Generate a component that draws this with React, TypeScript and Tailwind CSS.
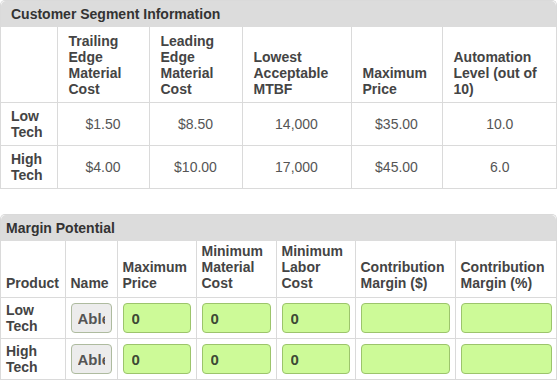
import React from 'react';

const segCols = [
  { label: 'Trailing Edge Material Cost', w: 'w-[92px]' },
  { label: 'Leading Edge Material Cost', w: 'w-[93px]' },
  { label: 'Lowest Acceptable MTBF', w: 'w-[109px]' },
  { label: 'Maximum Price', w: 'w-[91px]' },
  { label: 'Automation Level (out of 10)', w: 'w-[115px]' },
];

const segRows = [
  { name: 'Low Tech', values: ['$1.50', '$8.50', '14,000', '$35.00', '10.0'] },
  { name: 'High Tech', values: ['$4.00', '$10.00', '17,000', '$45.00', '6.0'] },
];

const marginRows = ['Low Tech', 'High Tech'];

function GreenInput({ value }: { value: string }) {
  return (
    <input
      readOnly
      value={value}
      className="w-full h-[30px] rounded-[4px] border border-[#9cc46c] bg-[#cdfa98] px-[8px] text-[15px] font-bold text-[#3d4a35] outline-none"
    />
  );
}

export default function App() {
  return (
    <div className="w-[557px] h-[387px] overflow-hidden bg-white font-['Liberation_Sans',Arial,sans-serif] text-[14px] leading-4 text-[#444]">
      {/* Customer Segment Information */}
      <div className="rounded-t-[5px] border border-[#dadada] border-b-0">
        <div className="h-[26px] rounded-t-[5px] bg-[#dcdcdc] px-[10px] flex items-center font-bold text-[14px] text-[#333]">
          Customer Segment Information
        </div>
        <table className="w-full table-fixed border-collapse">
          <thead>
            <tr>
              <th className="w-[56px] h-[75px] border-r border-b border-[#dadada]"></th>
              {segCols.map((c) => (
                <th
                  key={c.label}
                  className={`${c.w} h-[75px] border-r last:border-r-0 border-b border-[#dadada] align-bottom text-left font-bold px-[11px] pb-[5px] text-[#444]`}
                >
                  {c.label}
                </th>
              ))}
            </tr>
          </thead>
          <tbody>
            {segRows.map((r) => (
              <tr key={r.name}>
                <td className="h-[43px] border-r border-b border-[#dadada] px-[10px] font-bold text-[#444]">
                  {r.name.split(' ').map((p) => (
                    <div key={p}>{p}</div>
                  ))}
                </td>
                {r.values.map((v, i) => (
                  <td
                    key={i}
                    className="h-[43px] border-r last:border-r-0 border-b border-[#dadada] text-center text-[#555]"
                  >
                    {v}
                  </td>
                ))}
              </tr>
            ))}
          </tbody>
        </table>
      </div>

      {/* Margin Potential */}
      <div className="mt-[25px] rounded-t-[5px] border border-[#dadada] border-b-0">
        <div className="h-[26px] rounded-t-[5px] bg-[#dcdcdc] px-[5px] flex items-center font-bold text-[14px] text-[#333]">
          Margin Potential
        </div>
        <table className="w-full table-fixed border-collapse">
          <thead>
            <tr>
              <th className="w-[64px] h-[57px] border-r border-b border-[#dadada] align-bottom text-left font-bold px-[5px] pb-[6px]">
                Product
              </th>
              <th className="w-[52px] border-r border-b border-[#dadada] align-bottom text-left font-bold px-[5px] pb-[6px]">
                Name
              </th>
              <th className="w-[79px] border-r border-b border-[#dadada] align-bottom text-left font-bold px-[5px] pb-[6px]">
                Maximum Price
              </th>
              <th className="w-[80px] border-r border-b border-[#dadada] align-bottom text-left font-bold px-[5px] pb-[6px]">
                Minimum Material Cost
              </th>
              <th className="w-[79px] border-r border-b border-[#dadada] align-bottom text-left font-bold px-[5px] pb-[6px]">
                Minimum Labor Cost
              </th>
              <th className="w-[100px] border-r border-b border-[#dadada] align-bottom text-left font-bold px-[5px] pb-[6px]">
                Contribution Margin ($)
              </th>
              <th className="w-[102px] border-b border-[#dadada] align-bottom text-left font-bold px-[5px] pb-[6px]">
                Contribution Margin (%)
              </th>
            </tr>
          </thead>
          <tbody>
            {marginRows.map((name) => (
              <tr key={name}>
                <td className="h-[41px] border-r border-b border-[#dadada] px-[5px] font-bold">
                  {name.split(' ').map((p) => (
                    <div key={p}>{p}</div>
                  ))}
                </td>
                <td className="border-r border-b border-[#dadada] px-[5px]">
                  <input
                    readOnly
                    value="Able"
                    className="w-full h-[30px] rounded-[4px] border border-[#aebb9f] bg-[#ececec] px-[6px] text-[15px] font-bold text-[#555] outline-none"
                  />
                </td>
                <td className="border-r border-b border-[#dadada] px-[5px]">
                  <GreenInput value="0" />
                </td>
                <td className="border-r border-b border-[#dadada] px-[5px]">
                  <GreenInput value="0" />
                </td>
                <td className="border-r border-b border-[#dadada] px-[5px]">
                  <GreenInput value="0" />
                </td>
                <td className="border-r border-b border-[#dadada] px-[5px]">
                  <GreenInput value="" />
                </td>
                <td className="border-b border-[#dadada] px-[5px]">
                  <GreenInput value="" />
                </td>
              </tr>
            ))}
          </tbody>
        </table>
      </div>
    </div>
  );
}
